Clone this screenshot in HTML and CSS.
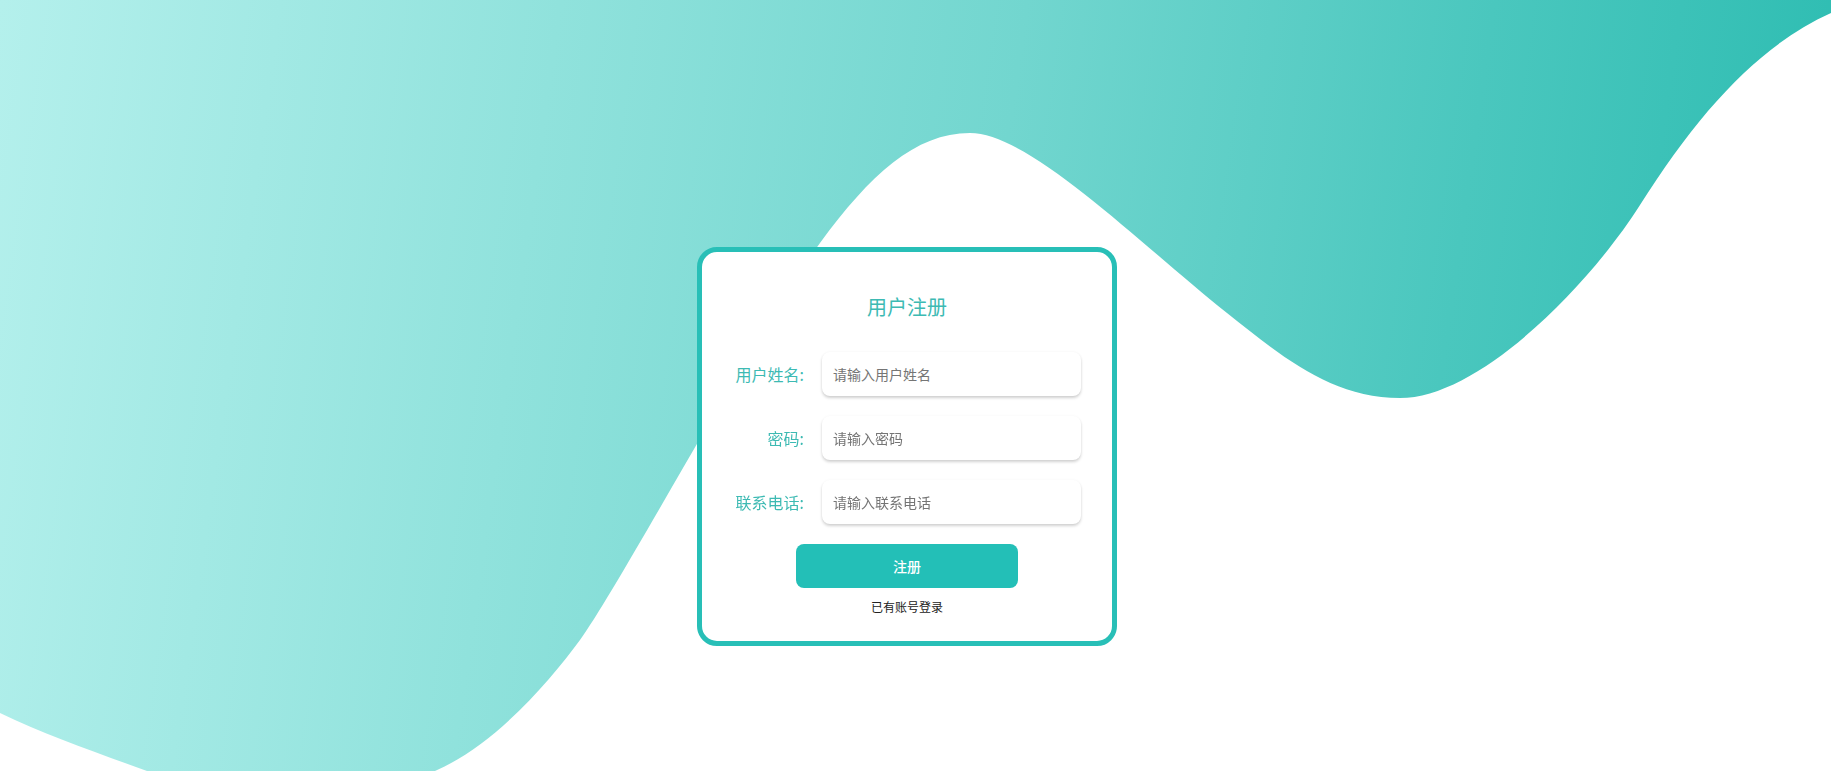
FILE: index.html
```html
<!DOCTYPE html>
<html lang="zh-CN">
<head>
<meta charset="utf-8">
<title>用户注册</title>
<link rel="stylesheet" href="styles.css">
</head>
<body>
<svg class="bg" viewBox="0 0 1831 771" preserveAspectRatio="none" aria-hidden="true">
  <defs>
    <linearGradient id="wave" gradientUnits="userSpaceOnUse" x1="0" y1="0" x2="1831" y2="260">
      <stop offset="0" stop-color="#b4f0ec"/>
      <stop offset="0.3" stop-color="#90e2dc"/>
      <stop offset="0.55" stop-color="#72d6cf"/>
      <stop offset="0.8" stop-color="#4ac7be"/>
      <stop offset="1" stop-color="#2ebdb2"/>
    </linearGradient>
  </defs>
  <path fill="url(#wave)" d="M0,0 H1831 V13
    C1760,45 1700,110 1640,205
    C1590,284 1480,398 1400,398
    C1330,398 1280,355 1227,313
    C1140,244 1030,133 970,133
    C915,133 870,175 820,243
    C760,325 620,585 580,640
    C550,681 495,745 435,771
    L147,771 C95,752 45,735 0,713 Z"/>
</svg>
<main class="page">
  <section class="card">
    <h1 class="title">用户注册</h1>
    <form class="form">
      <div class="row">
        <label class="label" for="name">用户姓名:</label>
        <input class="input" id="name" type="text" placeholder="请输入用户姓名">
      </div>
      <div class="row">
        <label class="label" for="pwd">密码:</label>
        <input class="input" id="pwd" type="password" placeholder="请输入密码">
      </div>
      <div class="row">
        <label class="label" for="tel">联系电话:</label>
        <input class="input" id="tel" type="text" placeholder="请输入联系电话">
      </div>
      <button class="btn" type="button">注册</button>
      <a class="link" href="#">已有账号登录</a>
    </form>
  </section>
</main>
</body>
</html>
```

FILE: styles.css
```css
html, body {
  margin: 0;
  padding: 0;
  width: 100%;
  height: 100%;
  overflow: hidden;
  background: #ffffff;
  font-family: "Noto Sans CJK SC", "Noto Sans", sans-serif;
}

.bg {
  position: fixed;
  left: 0;
  top: 0;
  width: 1831px;
  height: 771px;
  z-index: 0;
}

.page {
  position: relative;
  z-index: 1;
  display: flex;
  justify-content: center;
  padding: 247px 17px 0 0;
  box-sizing: border-box;
}

.card {
  width: 420px;
  height: 399px;
  box-sizing: border-box;
  border: 5px solid #28bfb7;
  border-radius: 20px;
  background: #ffffff;
  padding-top: 40px;
}

.title {
  margin: 0;
  height: 30px;
  line-height: 30px;
  font-size: 20px;
  font-weight: 400;
  color: #3dbab3;
  text-align: center;
}

.form {
  display: flex;
  flex-direction: column;
  margin-top: 30px;
}

.row {
  display: flex;
  align-items: center;
  height: 44px;
  margin-bottom: 20px;
}

.label {
  width: 120px;
  box-sizing: border-box;
  padding-right: 18px;
  text-align: right;
  font-size: 16px;
  color: #3dbab3;
  line-height: 44px;
}

.input {
  width: 259px;
  height: 44px;
  box-sizing: border-box;
  border: none;
  outline: none;
  border-radius: 8px;
  background: #ffffff;
  padding: 0 11px;
  font-family: "Noto Sans CJK SC", "Noto Sans", sans-serif;
  font-size: 14px;
  color: #333;
  box-shadow: 0 2px 3px rgba(0, 0, 0, 0.18), 0 0 3px rgba(0, 0, 0, 0.04);
}

.input::placeholder {
  color: #757575;
}

.btn {
  align-self: center;
  width: 222px;
  height: 44px;
  border: none;
  border-radius: 8px;
  background: #23bfb7;
  color: #ffffff;
  font-family: "Noto Sans CJK SC", "Noto Sans", sans-serif;
  font-size: 14px;
  font-weight: 500;
  cursor: pointer;
}

.link {
  align-self: center;
  margin-top: 10px;
  line-height: 18px;
  font-size: 12px;
  color: #222;
  text-decoration: none;
}
```
